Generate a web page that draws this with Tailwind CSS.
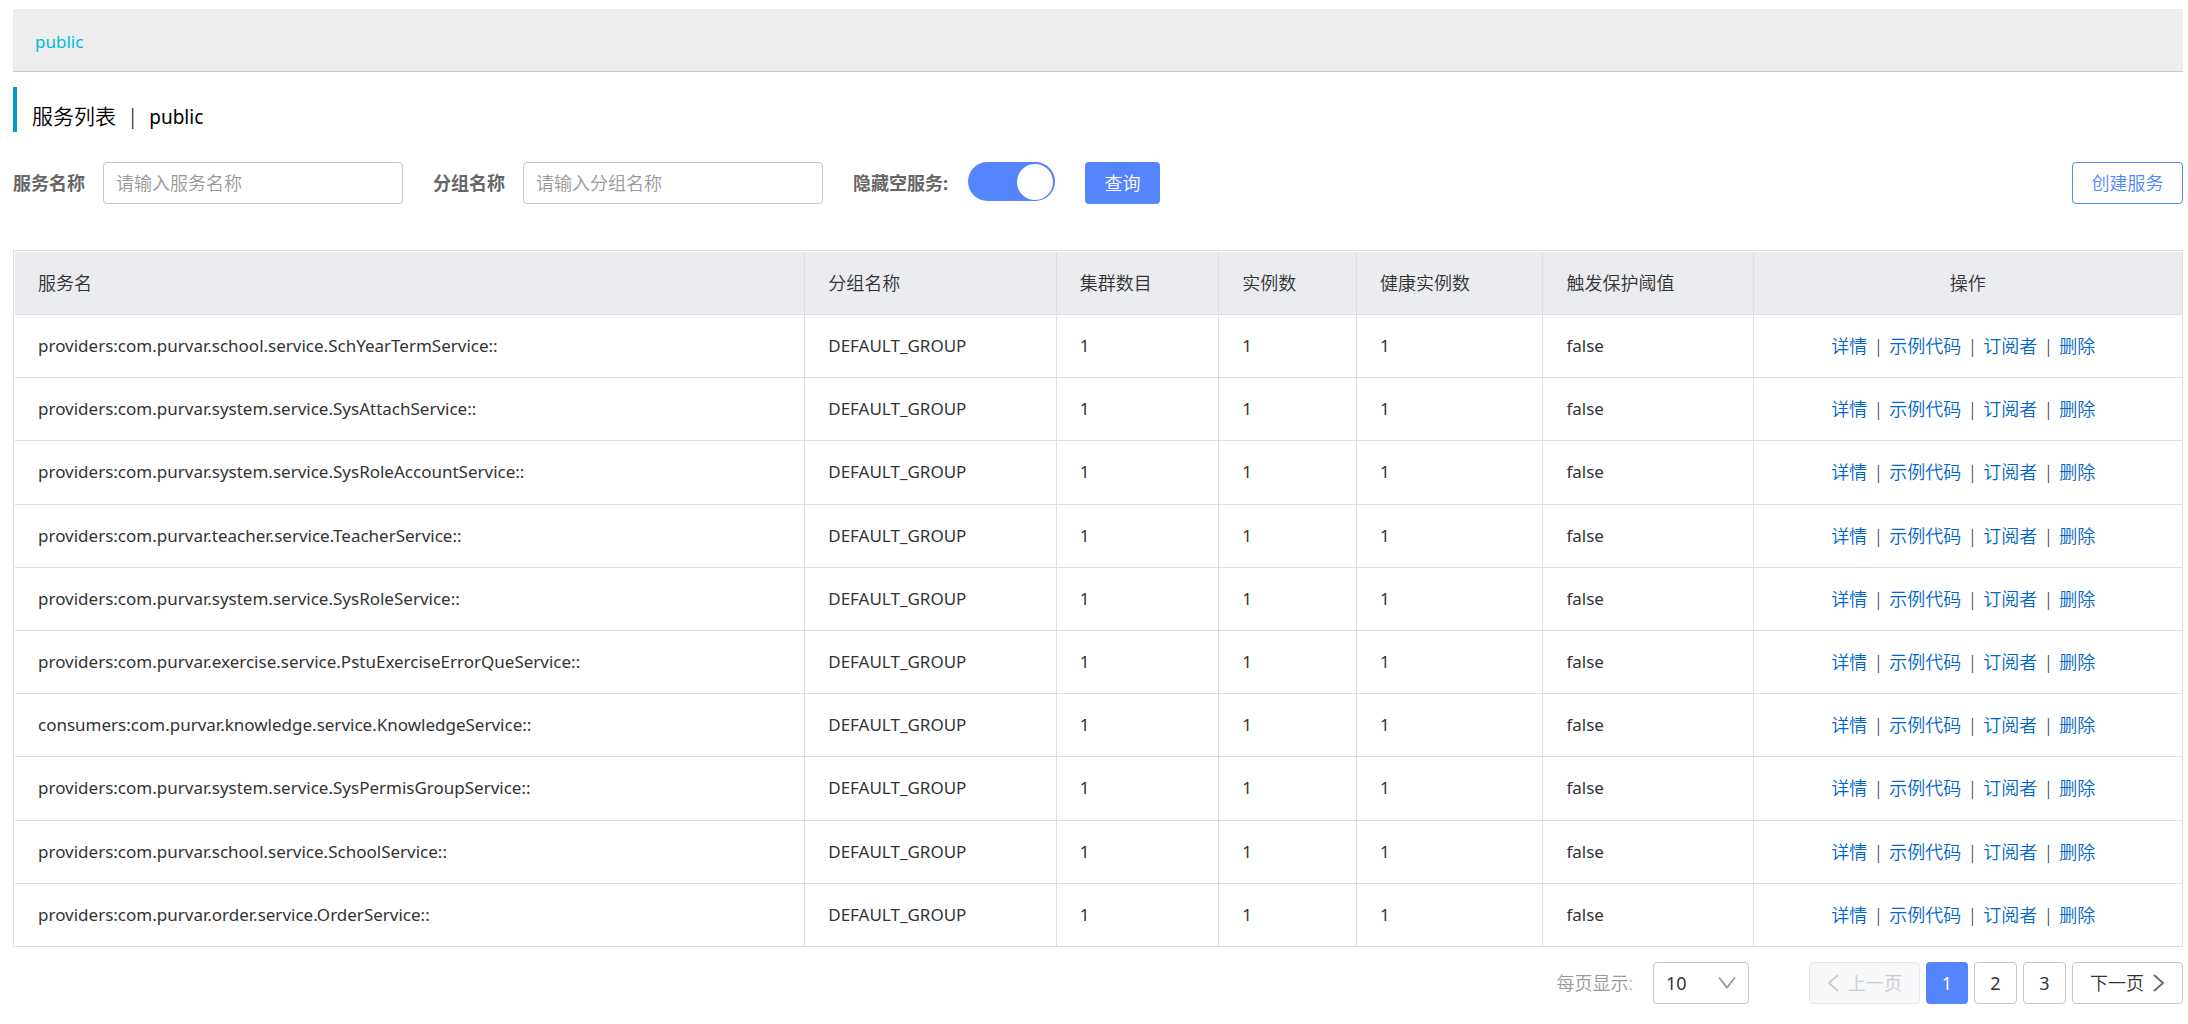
<!DOCTYPE html>
<html lang="zh-CN">

<head>
  <meta charset="UTF-8">
  <meta name="viewport" content="width=device-width, initial-scale=1.0">
  <script src="https://cdn.jsdelivr.net/npm/@tailwindcss/browser@4"></script>
  <title>服务列表</title>
</head>

<body class="bg-white pt-[9px] pl-[13px] pr-[5px] font-['Noto_Sans','Noto_Sans_CJK_SC',sans-serif] text-[18px] leading-6 text-[#333]">

  <!-- Namespace bar -->
  <nav class="flex items-center h-[63px] pt-1 pl-[22px] bg-[#ededed] border-b border-[#ccc]">
    <a href="#" class="text-[17px] text-[#00bbe0]">public</a>
  </nav>

  <h1 class="mt-[15px] h-[45px] pl-[15px] pt-[15px] border-l-4 border-[#0099cc] text-[21px] leading-7 font-[350] text-black whitespace-pre"><span>服务列表</span>  |  <span class="font-normal text-[19px]">public</span></h1>

  <!-- Search form -->
  <form class="flex items-center mt-[30px]">
    <label for="serviceName" class="mr-[18px] font-bold text-[#666]">服务名称</label>
    <input id="serviceName" type="text" placeholder="请输入服务名称"
      class="w-[300px] h-[42px] mr-[30px] px-3 border border-[#c4c6cf] rounded-[4px] font-[350] placeholder:text-[#999] focus:outline-none focus:border-[#5584ff]">
    <label for="groupName" class="mr-[18px] font-bold text-[#666]">分组名称</label>
    <input id="groupName" type="text" placeholder="请输入分组名称"
      class="w-[300px] h-[42px] mr-[30px] px-3 border border-[#c4c6cf] rounded-[4px] font-[350] placeholder:text-[#999] focus:outline-none focus:border-[#5584ff]">
    <label for="hideEmpty" class="mr-5 font-bold text-[#666]">隐藏空服务:</label>
    <input id="hideEmpty" type="checkbox" role="switch" checked
      class="appearance-none flex items-center w-[87px] h-[39px] mr-[30px] mb-[3px] px-[2px] rounded-full bg-[#c4c6cf] checked:bg-[#5584ff] checked:justify-end before:content-[''] before:w-9 before:h-9 before:rounded-full before:bg-white cursor-pointer">
    <button type="button" class="w-[75px] h-[42px] rounded-[4px] bg-[#5584ff] text-white font-[350] hover:bg-[#3e71f7]">查询</button>
    <button type="button" class="ml-auto w-[111px] h-[42px] border border-[#5584ff] rounded-[4px] text-[#5584ff] font-[350] hover:bg-[#3e71f7] hover:text-white">创建服务</button>
  </form>

  <!-- Service table -->
  <div class="mt-[46px] pt-px pl-px border-t border-l border-[#dcdee3]">
    <table class="w-full h-[695px] table-fixed border-separate border-spacing-0">
      <colgroup>
        <col class="w-[36.45%]">
        <col class="w-[11.6%]">
        <col class="w-[7.5%]">
        <col class="w-[6.35%]">
        <col class="w-[8.6%]">
        <col class="w-[9.7%]">
        <col>
      </colgroup>
      <thead>
        <tr class="h-[63px] bg-[#ebecf0] text-left *:px-[23px] *:font-[350] *:border-r *:border-b *:border-[#dcdee3]">
          <th>服务名</th>
          <th>分组名称</th>
          <th>集群数目</th>
          <th>实例数</th>
          <th>健康实例数</th>
          <th>触发保护阈值</th>
          <th class="text-center">操作</th>
        </tr>
      </thead>
      <tbody id="serviceRows"></tbody>
    </table>
  </div>

  <template id="rowTemplate">
    <tr class="text-[17px] *:px-[23px] *:border-r *:border-b *:border-[#dcdee3]">
      <td></td>
      <td>DEFAULT_GROUP</td>
      <td>1</td>
      <td>1</td>
      <td>1</td>
      <td>false</td>
      <td>
        <div class="flex justify-center pr-[9px] text-[18px] font-[350]">
          <a href="#" class="text-[#0066cc]">详情</a>
          <span class="w-[22px] text-center">|</span>
          <a href="#" class="text-[#0066cc]">示例代码</a>
          <span class="w-[22px] text-center">|</span>
          <a href="#" class="text-[#0066cc]">订阅者</a>
          <span class="w-[22px] text-center">|</span>
          <a href="#" class="text-[#0066cc]">删除</a>
        </div>
      </td>
    </tr>
  </template>

  <!-- Pagination -->
  <div class="flex items-center justify-end mt-[15px]">
    <label for="pageSize" class="mr-5 font-[350] text-[#999]">每页显示:</label>
    <div class="relative mr-[60px]">
      <select id="pageSize" class="appearance-none block w-[96px] h-[42px] pl-3 border border-[#c4c6cf] rounded-[4px] bg-white">
        <option>10</option>
        <option>20</option>
        <option>30</option>
      </select>
      <svg class="absolute right-[13px] top-[13px] w-[18px] h-4 pointer-events-none" viewBox="0 0 18 16" fill="none" stroke="#999" stroke-width="1.8">
        <path d="M1 2.5l8 10 8-10" />
      </svg>
    </div>
    <div class="flex gap-[6px]">
      <button type="button" disabled class="flex items-center justify-center gap-[9px] w-[111px] h-[42px] border border-[#e6e7eb] rounded-[4px] bg-[#f7f8fa] font-[350] text-[#ccc]">
        <svg class="w-3 h-[18px]" viewBox="0 0 12 18" fill="none" stroke="currentColor" stroke-width="1.8">
          <path d="M11 1L2 9l9 8" />
        </svg>
        上一页
      </button>
      <button type="button" class="w-[42px] h-[42px] rounded-[4px] bg-[#5584ff] text-white">1</button>
      <button type="button" class="w-[43px] h-[42px] border border-[#c4c6cf] rounded-[4px]">2</button>
      <button type="button" class="w-[43px] h-[42px] border border-[#c4c6cf] rounded-[4px]">3</button>
      <button type="button" class="flex items-center justify-center gap-[9px] w-[111px] h-[42px] border border-[#c4c6cf] rounded-[4px] font-[350]">
        下一页
        <svg class="w-3 h-[18px]" viewBox="0 0 12 18" fill="none" stroke="#666" stroke-width="1.8">
          <path d="M1 1l9 8-9 8" />
        </svg>
      </button>
    </div>
  </div>

  <script>
    const services = [
      'providers:com.purvar.school.service.SchYearTermService::',
      'providers:com.purvar.system.service.SysAttachService::',
      'providers:com.purvar.system.service.SysRoleAccountService::',
      'providers:com.purvar.teacher.service.TeacherService::',
      'providers:com.purvar.system.service.SysRoleService::',
      'providers:com.purvar.exercise.service.PstuExerciseErrorQueService::',
      'consumers:com.purvar.knowledge.service.KnowledgeService::',
      'providers:com.purvar.system.service.SysPermisGroupService::',
      'providers:com.purvar.school.service.SchoolService::',
      'providers:com.purvar.order.service.OrderService::',
    ];

    const rows = document.getElementById('serviceRows');
    const template = document.getElementById('rowTemplate');
    services.forEach((name) => {
      const row = template.content.cloneNode(true);
      row.querySelector('td').textContent = name;
      rows.appendChild(row);
    });
  </script>
</body>

</html>
